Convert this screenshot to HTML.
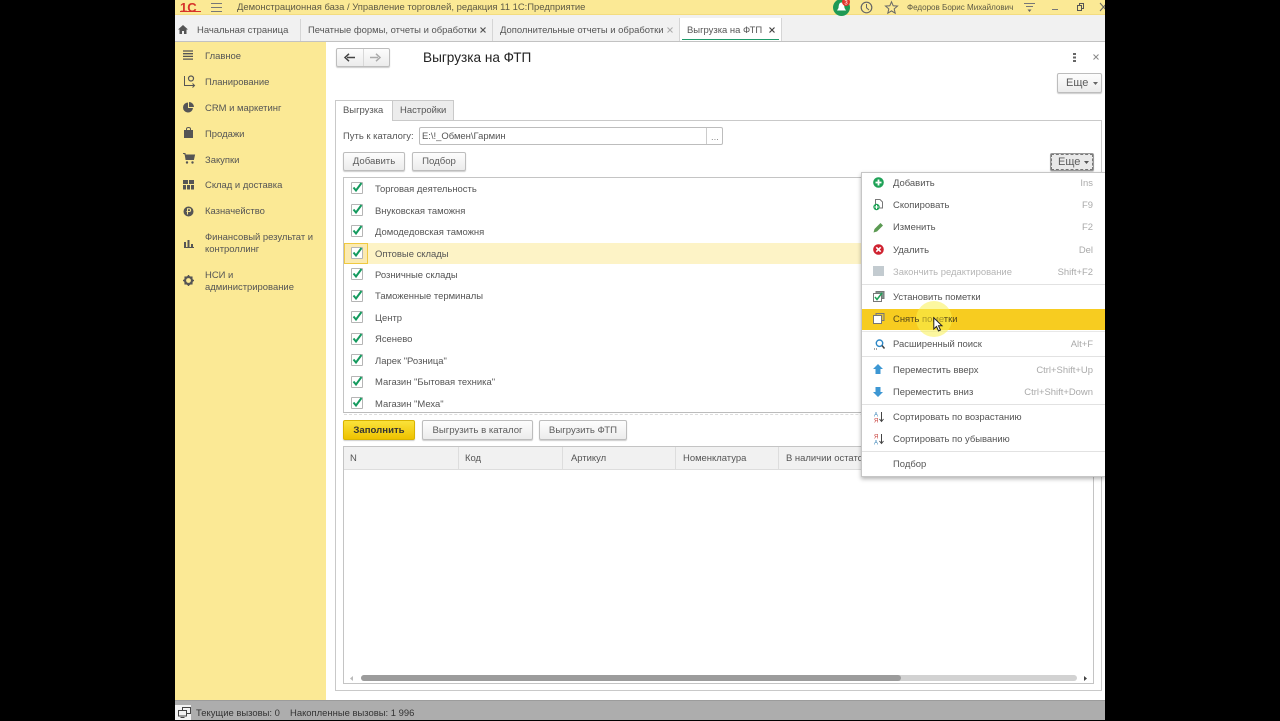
<!DOCTYPE html>
<html><head><meta charset="utf-8"><style>
html,body{margin:0;padding:0;width:1280px;height:720px;overflow:hidden;background:#000}
*{box-sizing:border-box}
#app{position:absolute;left:175px;top:0;width:930px;height:720px;overflow:hidden;background:#fff}
#root{position:absolute;left:0;top:0;width:1280px;height:720px;font-family:"Liberation Sans",sans-serif;font-size:9.45px;color:#4a4a4a}
.t{position:absolute;white-space:nowrap;line-height:15px;height:15px;margin-top:1px;font-size:9.45px;color:#555}
.b{position:absolute;border:1px solid #bdbdbd;border-radius:2px;background:linear-gradient(#fdfdfd,#ececec);box-shadow:0 1px 1px #ccc;text-align:center;line-height:18px;font-size:9.6px;color:#5c5c5c;white-space:nowrap}
.r{position:absolute}
.cb{position:absolute;left:351px;width:12px;height:12px;border:1px solid #b5b5b5;background:#fff;border-radius:1px}
svg{position:absolute;overflow:visible}
</style></head><body><div id="root">
<div id="app" style="left:175px"></div>
<div class="r" style="left:175px;top:0;width:930px;height:14px;background:#fbe995"></div>
<div class="r" style="left:175px;top:14px;width:930px;height:28px;background:#f1f1f1;border-top:1px solid #f3dc80;border-bottom:1px solid #c2c2c2"></div>
<div class="r" style="left:175px;top:42px;width:151px;height:658px;background:#fbe995"></div>
<div class="r" style="left:326px;top:42px;width:779px;height:658px;background:#fff"></div>
<div class="r" style="left:175px;top:700px;width:930px;height:20px;background:#adadad;border-top:1px solid #9c9c9c"></div>

<!-- Header -->
<div class="t" style="left:180px;top:-1px;font-size:13px;font-weight:bold;color:#d6322a;letter-spacing:0">1С</div>
<div class="r" style="left:180px;top:11px;width:21px;height:1px;background:#d6322a"></div>
<svg style="left:211px;top:3px" width="12" height="9"><path d="M0 .5H11M0 4.500H11M0 8.500H11" stroke="#777" fill="none"/></svg>
<div class="t" style="left:237px;top:-1px;color:#5e5a45">Демонстрационная база / Управление торговлей, редакция 11 1С:Предприятие</div>
<svg style="left:833px;top:-1px" width="18" height="17"><circle cx="8.500" cy="8.500" r="8.500" fill="#1f9a55"/><path d="M8.500 3.500C6 3.500 5.800 6 5.500 9L4 11.500H13L11.500 9C11.200 6 11 3.500 8.500 3.500Z" fill="#fff"/><circle cx="13" cy="3" r="4" fill="#e2352d"/><text x="13" y="5.500" font-size="6" fill="#fff" text-anchor="middle" font-family="Liberation Sans">3</text></svg>
<svg style="left:860px;top:1px" width="13" height="13"><circle cx="6.500" cy="6.500" r="5.300" fill="none" stroke="#666" stroke-width="1.200"/><path d="M6.500 3V6.800L9 9" fill="none" stroke="#666"/></svg>
<svg style="left:885px;top:1px" width="13" height="13"><path d="M6.500 .8L8.200 4.800L12.500 5.100L9.200 7.900L10.200 12.200L6.500 9.900L2.800 12.200L3.800 7.900L.5 5.100L4.800 4.800Z" fill="none" stroke="#666"/></svg>
<div class="t" style="left:907px;top:-1px;font-size:8.05px;color:#5e5a45">Федоров Борис Михайлович</div>
<svg style="left:1024px;top:3px" width="12" height="10"><path d="M0 .5H11M2 3.500H9" stroke="#777" fill="none"/><path d="M3.500 6.500H7.500L5.500 9Z" fill="#666"/></svg>
<div class="r" style="left:1052px;top:9px;width:6px;height:1px;background:#777"></div>
<svg style="left:1077px;top:3px" width="7" height="8"><rect x="2.500" y=".5" width="4" height="5" fill="none" stroke="#555"/><rect x=".5" y="2.500" width="4" height="5" fill="#fbe995" stroke="#555"/></svg>
<svg style="left:1100px;top:3px" width="5" height="8"><path d="M0 0L7 8M7 0L0 8" stroke="#666"/></svg>

<!-- Tabs -->
<svg style="left:178px;top:25px" width="10" height="9"><path d="M5 0L10 4.500H8.500V9H6V6H4V9H1.500V4.500H0Z" fill="#555"/></svg>
<div class="t" style="left:197px;top:22px">Начальная страница</div>
<div class="r" style="left:300px;top:19px;width:1px;height:22px;background:#d5d5d5"></div>
<div class="t" style="left:308px;top:22px">Печатные формы, отчеты и обработки</div>
<svg style="left:480px;top:27px" width="6" height="6"><path d="M.5 .5L5.500 5.500M5.500 .5L.5 5.500" stroke="#555" stroke-width="1.200"/></svg>
<div class="r" style="left:492px;top:19px;width:1px;height:22px;background:#d5d5d5"></div>
<div class="t" style="left:500px;top:22px">Дополнительные отчеты и обработки</div>
<svg style="left:667px;top:27px" width="6" height="6"><path d="M.5 .5L5.500 5.500M5.500 .5L.5 5.500" stroke="#aaa"/></svg>
<div class="r" style="left:679px;top:18px;width:103px;height:23px;background:#fff;border-left:1px solid #d5d5d5;border-right:1px solid #d5d5d5"></div>
<div class="r" style="left:682px;top:39px;width:97px;height:1px;background:#1f9a6a"></div>
<div class="t" style="left:687px;top:22px">Выгрузка на ФТП</div>
<svg style="left:769px;top:27px" width="6" height="6"><path d="M.5 .5L5.500 5.500M5.500 .5L.5 5.500" stroke="#444" stroke-width="1.200"/></svg>

<!-- Sidebar -->
<svg style="left:183px;top:50px" width="11" height="11"><path d="M0 1H10M0 3.700H10M0 6.400H10M0 9.100H10" stroke="#555" stroke-width="1.300"/></svg>
<div class="t" style="left:205px;top:48px">Главное</div>
<svg style="left:183px;top:75px" width="12" height="13"><path d="M1.500 1V10.500H11M9.500 8.500L11.500 10.500L9.500 12.500" fill="none" stroke="#555"/><circle cx="8" cy="3.500" r="2.500" fill="none" stroke="#555" stroke-width="1.200"/></svg>
<div class="t" style="left:205px;top:74px">Планирование</div>
<svg style="left:183px;top:102px" width="11" height="11"><path d="M5 .5A5 5 0 1 0 10 6H5Z" fill="#555"/><path d="M6 0A5 5 0 0 1 11 5H6Z" fill="#555"/></svg>
<div class="t" style="left:205px;top:100px">CRM и маркетинг</div>
<svg style="left:184px;top:127px" width="10" height="12"><rect y="3" width="9" height="8" fill="#555"/><path d="M2.500 4V2C2.500 0 6.500 0 6.500 2V4" fill="none" stroke="#555"/></svg>
<div class="t" style="left:205px;top:126px">Продажи</div>
<svg style="left:183px;top:153px" width="12" height="11"><path d="M0 .5H2L3 6.500H10.500L11.500 2H2.500" fill="#555" stroke="#555"/><circle cx="4" cy="9.500" r="1.200" fill="#555"/><circle cx="9.500" cy="9.500" r="1.200" fill="#555"/></svg>
<div class="t" style="left:205px;top:152px">Закупки</div>
<svg style="left:183px;top:180px" width="11" height="10"><path d="M0 0H5V4H0ZM6 0H11V4H6ZM0 5H3V9.500H0ZM4 5H7V9.500H4ZM8 5H11V9.500H8Z" fill="#555"/></svg>
<div class="t" style="left:205px;top:177px">Склад и доставка</div>
<svg style="left:183px;top:206px" width="11" height="11"><circle cx="5.500" cy="5.500" r="5" fill="#555"/><path d="M4.500 8.500V2.800H6.500C8 2.800 8 5.500 6.500 5.500H3.500" fill="none" stroke="#fbe995"/></svg>
<div class="t" style="left:205px;top:203px">Казначейство</div>
<svg style="left:184px;top:239px" width="10" height="9"><path d="M0 3H2V8H0ZM3.500 1H5.500V8H3.500ZM7 5H9V8H7ZM0 8H10V9H0Z" fill="#555"/></svg>
<div class="t" style="left:205px;top:229px">Финансовый результат и</div>
<div class="t" style="left:205px;top:241px">контроллинг</div>
<svg style="left:183px;top:275px" width="11" height="11"><circle cx="5.500" cy="5.500" r="3.500" fill="none" stroke="#555" stroke-width="2.200"/><path d="M5.500 0V11M0 5.500H11M1.600 1.600L9.400 9.400M9.400 1.600L1.600 9.400" stroke="#555" stroke-width="1.500" stroke-dasharray="2 7 2 0"/></svg>
<div class="t" style="left:205px;top:267px">НСИ и</div>
<div class="t" style="left:205px;top:279px">администрирование</div>

<!-- Form title -->
<div class="b" style="left:336px;top:48px;width:54px;height:19px"></div>
<div class="r" style="left:363px;top:49px;width:1px;height:17px;background:#d8d8d8"></div>
<svg style="left:344px;top:53px" width="11" height="9"><path d="M11 4.500H3M5 .8L1 4.500L5 8.200" fill="none" stroke="#444" stroke-width="1.500"/></svg>
<svg style="left:370px;top:53px" width="11" height="9"><path d="M0 4.500H8M6 .8L10 4.500L6 8.200" fill="none" stroke="#aaa" stroke-width="1.500"/></svg>
<div class="t" style="left:423px;top:49px;height:16px;line-height:16px;font-size:13.6px;color:#222">Выгрузка на ФТП</div>
<svg style="left:1073px;top:53px" width="3" height="9"><path d="M0 0H3V2H0ZM0 3.500H3V5.500H0ZM0 7H3V9H0Z" fill="#666"/></svg>
<svg style="left:1093px;top:54px" width="6" height="6"><path d="M.5 .5L5.500 5.500M5.500 .5L.5 5.500" stroke="#888"/></svg>
<div class="b" style="left:1057px;top:73px;width:45px;height:20px;text-align:left;padding-left:8px;font-size:11px;line-height:19px">Еще</div>
<svg style="left:1093px;top:82px" width="5" height="3"><path d="M0 0H5L2.500 3Z" fill="#666"/></svg>

<!-- Tabs panel -->
<div class="r" style="left:335px;top:120px;width:767px;height:571px;border:1px solid #c9c9c9"></div>
<div class="r" style="left:335px;top:100px;width:58px;height:21px;background:#fff;border:1px solid #c9c9c9;border-bottom:none"></div>
<div class="r" style="left:392px;top:100px;width:62px;height:20px;background:#ececec;border:1px solid #c9c9c9;border-bottom:none"></div>
<div class="t" style="left:343px;top:102px">Выгрузка</div>
<div class="t" style="left:400px;top:102px">Настройки</div>
<div class="t" style="left:343px;top:128px">Путь к каталогу:</div>
<div class="r" style="left:419px;top:127px;width:304px;height:18px;border:1px solid #bdbdbd;border-radius:2px;background:#fff"></div>
<div class="r" style="left:706px;top:128px;width:1px;height:16px;background:#ccc"></div>
<div class="t" style="left:711px;top:129px;color:#888">...</div>
<div class="t" style="left:422px;top:128px">E:\!_Обмен\Гармин</div>
<div class="b" style="left:343px;top:152px;width:62px;height:19px">Добавить</div>
<div class="b" style="left:412px;top:152px;width:54px;height:19px">Подбор</div>
<div class="b" style="left:1050px;top:153px;width:44px;height:18px;line-height:16px;border:1px solid #999;background:#e9e9e9;outline:1px dashed #777;outline-offset:-2px;text-align:left;padding-left:7px;font-size:11px">Еще</div>
<svg style="left:1084px;top:161px" width="5" height="3"><path d="M0 0H5L2.500 3Z" fill="#555"/></svg>

<!-- List -->
<div class="r" style="left:343px;top:177px;width:751px;height:236px;border:1px solid #c4c4c4;border-bottom:1px solid #bbb"></div>
<div class="r" style="left:344px;top:243px;width:517px;height:21px;background:#fdf3c6"></div>
<div class="r" style="left:344px;top:243px;width:24px;height:21px;background:#fbeab0;border:1px solid #f0c940"></div>
<div class="r" style="left:344px;top:414px;width:750px;border-top:1px dashed #ddd"></div>

<div class="cb" style="top:182px"></div><svg style="left:351px;top:182px" width="12" height="12"><path d="M2.500 5.500L5 8.500L10.500 1" fill="none" stroke="#149a5e" stroke-width="2"/></svg>
<div class="t" style="left:375px;top:181px">Торговая деятельность</div>
<div class="cb" style="top:204px"></div><svg style="left:351px;top:204px" width="12" height="12"><path d="M2.500 5.500L5 8.500L10.500 1" fill="none" stroke="#149a5e" stroke-width="2"/></svg>
<div class="t" style="left:375px;top:203px">Внуковская таможня</div>
<div class="cb" style="top:225px"></div><svg style="left:351px;top:225px" width="12" height="12"><path d="M2.500 5.500L5 8.500L10.500 1" fill="none" stroke="#149a5e" stroke-width="2"/></svg>
<div class="t" style="left:375px;top:224px">Домодедовская таможня</div>
<div class="cb" style="top:247px"></div><svg style="left:351px;top:247px" width="12" height="12"><path d="M2.500 5.500L5 8.500L10.500 1" fill="none" stroke="#149a5e" stroke-width="2"/></svg>
<div class="t" style="left:375px;top:246px">Оптовые склады</div>
<div class="cb" style="top:268px"></div><svg style="left:351px;top:268px" width="12" height="12"><path d="M2.500 5.500L5 8.500L10.500 1" fill="none" stroke="#149a5e" stroke-width="2"/></svg>
<div class="t" style="left:375px;top:267px">Розничные склады</div>
<div class="cb" style="top:290px"></div><svg style="left:351px;top:290px" width="12" height="12"><path d="M2.500 5.500L5 8.500L10.500 1" fill="none" stroke="#149a5e" stroke-width="2"/></svg>
<div class="t" style="left:375px;top:288px">Таможенные терминалы</div>
<div class="cb" style="top:311px"></div><svg style="left:351px;top:311px" width="12" height="12"><path d="M2.500 5.500L5 8.500L10.500 1" fill="none" stroke="#149a5e" stroke-width="2"/></svg>
<div class="t" style="left:375px;top:310px">Центр</div>
<div class="cb" style="top:333px"></div><svg style="left:351px;top:333px" width="12" height="12"><path d="M2.500 5.500L5 8.500L10.500 1" fill="none" stroke="#149a5e" stroke-width="2"/></svg>
<div class="t" style="left:375px;top:331px">Ясенево</div>
<div class="cb" style="top:354px"></div><svg style="left:351px;top:354px" width="12" height="12"><path d="M2.500 5.500L5 8.500L10.500 1" fill="none" stroke="#149a5e" stroke-width="2"/></svg>
<div class="t" style="left:375px;top:353px">Ларек "Розница"</div>
<div class="cb" style="top:376px"></div><svg style="left:351px;top:376px" width="12" height="12"><path d="M2.500 5.500L5 8.500L10.500 1" fill="none" stroke="#149a5e" stroke-width="2"/></svg>
<div class="t" style="left:375px;top:374px">Магазин "Бытовая техника"</div>
<div class="cb" style="top:397px"></div><svg style="left:351px;top:397px" width="12" height="12"><path d="M2.500 5.500L5 8.500L10.500 1" fill="none" stroke="#149a5e" stroke-width="2"/></svg>
<div class="t" style="left:375px;top:396px">Магазин "Меха"</div>

<!-- Buttons -->
<div class="b" style="left:343px;top:420px;width:72px;height:20px;line-height:19px;background:linear-gradient(#fbe23a,#eec200);border-color:#d9b400;color:#333;font-weight:bold">Заполнить</div>
<div class="b" style="left:422px;top:420px;width:111px;height:20px;line-height:19px">Выгрузить в каталог</div>
<div class="b" style="left:539px;top:420px;width:88px;height:20px;line-height:19px">Выгрузить ФТП</div>

<!-- Table -->
<div class="r" style="left:343px;top:446px;width:751px;height:238px;border:1px solid #c4c4c4"></div>
<div class="r" style="left:344px;top:447px;width:749px;height:23px;background:#f1f1f1;border-bottom:1px solid #ddd"></div>
<div class="r" style="left:458px;top:447px;width:1px;height:23px;background:#ddd"></div>
<div class="r" style="left:562px;top:447px;width:1px;height:23px;background:#ddd"></div>
<div class="r" style="left:675px;top:447px;width:1px;height:23px;background:#ddd"></div>
<div class="r" style="left:778px;top:447px;width:1px;height:23px;background:#ddd"></div>
<div class="t" style="left:350px;top:450px">N</div>
<div class="t" style="left:465px;top:450px">Код</div>
<div class="t" style="left:571px;top:450px">Артикул</div>
<div class="t" style="left:683px;top:450px">Номенклатура</div>
<div class="t" style="left:786px;top:450px">В наличии остаток</div>
<div class="r" style="left:361px;top:675px;width:716px;height:6px;border-radius:3px;background:#d2d2d2"></div>
<div class="r" style="left:361px;top:675px;width:540px;height:6px;border-radius:3px;background:#9c9c9c"></div>
<svg style="left:350px;top:676px" width="3" height="5"><path d="M3 0V5L0 2.500Z" fill="#bbb"/></svg>
<svg style="left:1084px;top:676px" width="3" height="5"><path d="M0 0V5L3 2.500Z" fill="#444"/></svg>

<!-- Status -->
<div class="r" style="left:175px;top:705px;width:16px;height:15px;background:#f3f3f3"></div>
<svg style="left:178px;top:707px" width="13" height="11"><rect x="4.500" y=".5" width="8" height="6" fill="none" stroke="#444"/><rect x=".5" y="3.500" width="8" height="5.500" fill="#f3f3f3" stroke="#444"/><path d="M2.500 10.500H6.500" stroke="#444"/></svg>
<div class="t" style="left:196px;top:705px;color:#333">Текущие вызовы: 0</div>
<div class="t" style="left:290px;top:705px;color:#333">Накопленные вызовы: 1 996</div>

<!-- Menu -->
<div class="r" style="left:861px;top:172px;width:244px;height:305px;background:#fff;border:1px solid #c6c6c6;border-right:none;box-shadow:0 2px 4px rgba(0,0,0,.3)"></div>
<div class="r" style="left:862px;top:284px;width:243px;height:1px;background:#e2e2e2"></div>
<div class="r" style="left:862px;top:309px;width:243px;height:21px;background:#f7cc20"></div>
<div class="r" style="left:862px;top:331px;width:243px;height:1px;background:#e8e8e8"></div>
<div class="r" style="left:862px;top:356px;width:243px;height:1px;background:#e2e2e2"></div>
<div class="r" style="left:862px;top:404px;width:243px;height:1px;background:#e2e2e2"></div>
<div class="r" style="left:862px;top:451px;width:243px;height:1px;background:#e2e2e2"></div>

<svg style="left:873px;top:177px" width="11" height="11"><circle cx="5.500" cy="5.500" r="5.300" fill="#1fa257"/><path d="M5.500 2.500V8.500M2.500 5.500H8.500" stroke="#fff" stroke-width="1.800"/></svg>
<div class="t" style="left:893px;top:175px">Добавить</div><div class="t" style="right:187px;top:175px;color:#aaa">Ins</div>
<svg style="left:873px;top:199px" width="11" height="12"><path d="M2.500 .5H7L9.500 3V9H2.500Z" fill="#fff" stroke="#777"/><circle cx="3.500" cy="8" r="3.200" fill="#1fa257"/><path d="M3.500 6V10M1.500 8H5.500" stroke="#fff"/></svg>
<div class="t" style="left:893px;top:197px">Скопировать</div><div class="t" style="right:187px;top:197px;color:#aaa">F9</div>
<svg style="left:873px;top:222px" width="11" height="11"><path d="M.5 10.500L1.500 7L7.500 1L10 3.500L4 9.500Z" fill="#5b9a52"/></svg>
<div class="t" style="left:893px;top:219px">Изменить</div><div class="t" style="right:187px;top:219px;color:#aaa">F2</div>
<svg style="left:873px;top:244px" width="11" height="11"><circle cx="5.500" cy="5.500" r="5.300" fill="#cf2230"/><path d="M3.300 3.300L7.700 7.700M7.700 3.300L3.300 7.700" stroke="#fff" stroke-width="1.600"/></svg>
<div class="t" style="left:893px;top:242px">Удалить</div><div class="t" style="right:187px;top:242px;color:#aaa">Del</div>
<div class="r" style="left:873px;top:266px;width:11px;height:10px;background:#c3cbd0"></div>
<div class="t" style="left:893px;top:264px;color:#b5b5b5">Закончить редактирование</div><div class="t" style="right:187px;top:264px;color:#aaa">Shift+F2</div>
<svg style="left:873px;top:291px" width="12" height="11"><rect x="3" y=".5" width="8" height="7" fill="#7d9a8c" stroke="#777"/><rect x=".5" y="2.500" width="8" height="8" fill="#fff" stroke="#777"/><path d="M2 6L4 8.500L9 2" fill="none" stroke="#1fa257" stroke-width="1.500"/></svg>
<div class="t" style="left:893px;top:289px">Установить пометки</div>
<svg style="left:873px;top:313px" width="12" height="11"><rect x="3" y=".5" width="8" height="7" fill="#e2c33c" stroke="#777"/><rect x=".5" y="2.500" width="8" height="8" fill="#fff" stroke="#777"/></svg>
<div class="r" style="left:916px;top:301px;width:36px;height:36px;border-radius:50%;background:rgba(250,240,80,.55)"></div>
<div class="t" style="left:893px;top:311px;color:#55481a">Снять <span style="color:#a89626">поме</span>тки</div>
<svg style="left:933px;top:317px" width="10" height="15"><path d="M.8 .8V12L3.500 9.500L5.500 14L7.500 13L5.500 8.800H9Z" fill="#fff" stroke="#222"/></svg>
<svg style="left:873px;top:339px" width="12" height="11"><circle cx="6.500" cy="4.200" r="3.200" fill="none" stroke="#2b86c5" stroke-width="1.400"/><path d="M9 6.500L11.500 9.500" stroke="#444" stroke-width="1.500"/><path d="M1 10H5" stroke="#444" stroke-dasharray="1 1"/></svg>
<div class="t" style="left:893px;top:336px">Расширенный поиск</div><div class="t" style="right:187px;top:336px;color:#aaa">Alt+F</div>
<svg style="left:873px;top:364px" width="10" height="10"><path d="M5 0L10 5H7.500V10H2.500V5H0Z" fill="#3d97d3"/></svg>
<div class="t" style="left:893px;top:362px">Переместить вверх</div><div class="t" style="right:187px;top:362px;color:#aaa">Ctrl+Shift+Up</div>
<svg style="left:873px;top:387px" width="10" height="10"><path d="M5 10L10 5H7.500V0H2.500V5H0Z" fill="#3d97d3"/></svg>
<div class="t" style="left:893px;top:384px">Переместить вниз</div><div class="t" style="right:187px;top:384px;color:#aaa">Ctrl+Shift+Down</div>
<svg style="left:874px;top:411px" width="11" height="12"><text x="0" y="5.500" font-size="6" fill="#3d86b8" font-family="Liberation Sans">A</text><text x="0" y="11.500" font-size="6" fill="#c9403c" font-family="Liberation Sans">Я</text><path d="M7.500 1V10M5.500 8L7.500 10.500L9.500 8" stroke="#444" fill="none"/></svg>
<div class="t" style="left:893px;top:409px">Сортировать по возрастанию</div>
<svg style="left:874px;top:433px" width="11" height="12"><text x="0" y="5.500" font-size="6" fill="#c9403c" font-family="Liberation Sans">Я</text><text x="0" y="11.500" font-size="6" fill="#3d86b8" font-family="Liberation Sans">A</text><path d="M7.500 1V10M5.500 8L7.500 10.500L9.500 8" stroke="#444" fill="none"/></svg>
<div class="t" style="left:893px;top:431px">Сортировать по убыванию</div>
<div class="t" style="left:893px;top:456px">Подбор</div>
<div class="r" style="left:1105px;top:0;width:175px;height:720px;background:#000"></div>
</div></body></html>
